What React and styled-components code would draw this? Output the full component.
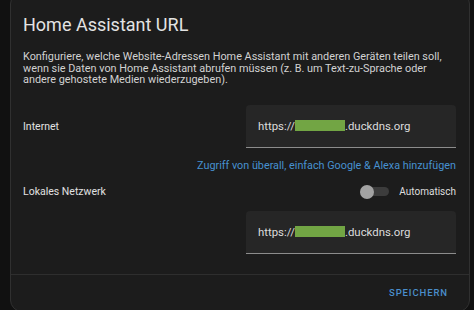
import React from "react";
import styled, { createGlobalStyle } from "styled-components";

const Global = createGlobalStyle`
  html, body { margin: 0; padding: 0; background: #111111; overflow: hidden; }
  body { font-family: Roboto, "Noto Sans", sans-serif; -webkit-font-smoothing: antialiased; }
  #root { padding-top: 1px; margin-top: -1px; }
`;

const Page = styled.div`
  width: 474px;
  height: 310px;
  padding-left: 10px;
  box-sizing: border-box;
  overflow: hidden;
`;

const Card = styled.div`
  margin-top: -8px;
  width: 460px;
  box-sizing: border-box;
  background: #1c1c1c;
  border: 1px solid #303030;
  border-radius: 12px;
  display: flex;
  flex-direction: column;
`;

const Body = styled.div`
  padding: 20px 13px 20px 12px;
  display: flex;
  flex-direction: column;
`;

const Title = styled.h2`
  margin: 0;
  font-size: 18px;
  line-height: 24px;
  font-weight: 400;
  color: #e3e3e3;
`;

const Desc = styled.p`
  margin: 14px 0 0;
  font-size: 10.85px;
  line-height: 11.5px;
  color: #d2d2d2;
`;

const Row = styled.div`
  display: flex;
  align-items: center;
  justify-content: space-between;
  margin-top: ${(p) => p.$mt}px;
`;

const Label = styled.span`
  font-size: 10.5px;
  color: #e1e1e1;
`;

const Field = styled.div`
  width: 210px;
  height: 43px;
  box-sizing: border-box;
  background: #262626;
  border-bottom: 1px solid #8c8c8c;
  border-radius: 4px 4px 0 0;
  display: flex;
  align-items: center;
  padding-left: 12px;
  font-size: 11.4px;
  color: #dcdcdc;
  margin-left: auto;
`;

const Redact = styled.span`
  display: inline-block;
  width: 50px;
  height: 11px;
  background: #72a544;
`;

const LinkRow = styled.div`
  margin-top: 11px;
  text-align: right;
  font-size: 10.8px;
  line-height: 14px;
  color: #4791d0;
`;

const Switch = styled.div`
  position: relative;
  width: 29px;
  height: 14px;
  display: flex;
  align-items: center;
`;

const Track = styled.div`
  width: 29px;
  height: 9px;
  border-radius: 5px;
  background: #3c3c3c;
`;

const Knob = styled.div`
  position: absolute;
  left: 0;
  top: 0;
  width: 14px;
  height: 14px;
  border-radius: 50%;
  background: #a3a3a3;
`;

const Toggle = styled.div`
  display: flex;
  align-items: center;
  gap: 10px;
  font-size: 10px;
  color: #dedede;
  height: 20px;
`;

const Footer = styled.div`
  border-top: 1px solid #2e2e2e;
  height: 36px;
  display: flex;
  align-items: center;
  justify-content: flex-end;
  padding-right: 21px;
`;

const Button = styled.button`
  background: none;
  border: none;
  padding: 0;
  font-family: Roboto, sans-serif;
  font-size: 9.5px;
  font-weight: 500;
  letter-spacing: 0.9px;
  color: #4a8ecb;
`;

function UrlField() {
  return (
    <Field>
      https://<Redact />.duckdns.org
    </Field>
  );
}

export default function App() {
  return (
    <>
      <Global />
      <Page>
        <Card>
          <Body>
            <Title>Home Assistant URL</Title>
            <Desc>
              Konfiguriere, welche Website-Adressen Home Assistant mit anderen Geräten teilen soll,
              <br />
              wenn sie Daten von Home Assistant abrufen müssen (z. B. um Text-zu-Sprache oder
              <br />
              andere gehostete Medien wiederzugeben).
            </Desc>
            <Row $mt={19}>
              <Label>Internet</Label>
              <UrlField />
            </Row>
            <LinkRow>Zugriff von überall, einfach Google &amp; Alexa hinzufügen</LinkRow>
            <Row $mt={9}>
              <Label>Lokales Netzwerk</Label>
              <Toggle>
                <Switch>
                  <Track />
                  <Knob />
                </Switch>
                Automatisch
              </Toggle>
            </Row>
            <Row $mt={9}>
              <UrlField />
            </Row>
          </Body>
          <Footer>
            <Button>SPEICHERN</Button>
          </Footer>
        </Card>
      </Page>
    </>
  );
}
